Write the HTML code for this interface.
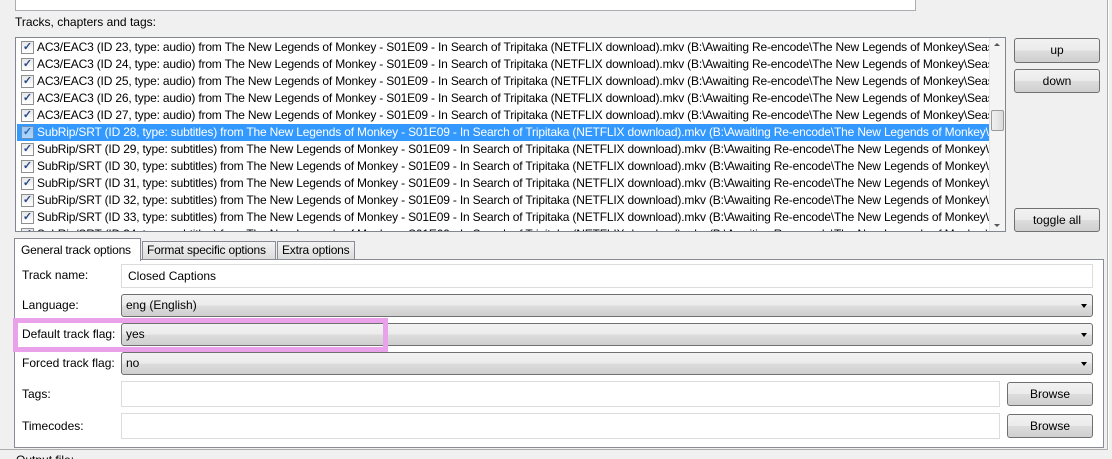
<!DOCTYPE html>
<html><head><meta charset="utf-8"><style>
*{box-sizing:border-box;margin:0;padding:0}
html,body{width:1112px;height:459px;overflow:hidden}
body{background:#f0f0f0;font-family:"Liberation Sans",sans-serif;font-size:12px;color:#000;position:relative}
.a{position:absolute;white-space:nowrap}
.outer{left:-2px;top:-2px;width:1110px;height:452px;border:1px solid #adadad;border-top:none;box-shadow:1px 0 0 #fff}
.list{left:15px;top:37px;width:991px;height:195px;background:#fff;border:1px solid #828790;overflow:hidden;letter-spacing:-0.18px}
.row{position:absolute;left:1px;height:17px;width:974px;white-space:nowrap;line-height:17px;overflow:hidden}
.row .cb{position:absolute;left:4px;top:2px;width:13px;height:13px;border:1px solid #8e8f8f;background:linear-gradient(#e8e8e8,#fff);font-size:11px;line-height:11px;text-align:center;color:#2a4a8a;font-weight:bold;letter-spacing:0}
.row span.t{position:absolute;left:20px}
.sel{background:#3399ff;color:#fff}
.sb{position:absolute;right:0;top:0;width:16px;height:193px;background:#f4f4f4;border-left:1px solid #e6e6e6}
.btn{position:absolute;border:1px solid #707070;border-radius:3px;background:linear-gradient(#f2f2f2 0,#ebebeb 50%,#dddddd 51%,#cfcfcf);text-align:center;font-size:12px}
.tabs{left:14px;top:259px;width:1090px;height:189px;background:#fff;border:1px solid #898c95}
.tab{position:absolute;top:241px;height:19px;border:1px solid #898c95;background:linear-gradient(#f2f2f2,#dcdcdc);line-height:17px;padding:0 4px;white-space:nowrap;overflow:hidden;letter-spacing:-0.2px}
.lbl{position:absolute;left:22px;white-space:nowrap}
.inp{position:absolute;left:121px;border:1px solid #dcdcdc;background:#fff;padding-left:6px}
.combo{position:absolute;left:121px;width:972px;height:23px;border:1px solid #707070;border-radius:3px;background:linear-gradient(#f2f2f2 0,#ebebeb 50%,#dddddd 51%,#cfcfcf);line-height:21px;padding-left:4px}
.combo:after{content:"";position:absolute;right:5px;top:9px;border-left:3.5px solid transparent;border-right:3.5px solid transparent;border-top:4px solid #000}
</style></head><body>
<div class="a outer"></div>
<div class="a" style="left:15px;top:-2px;width:901px;height:13px;background:#fff;border:1px solid #abadb3"></div>
<div class="a" style="left:15px;top:15px">Tracks, chapters and tags:</div>
<div class="a list">
<div class="row" style="top:1px"><div class="cb">✓</div><span class="t">AC3/EAC3 (ID 23, type: audio) from The New Legends of Monkey - S01E09 - In Search of Tripitaka (NETFLIX download).mkv (B:\Awaiting Re-encode\The New Legends of Monkey\Season 1)</span></div>
<div class="row" style="top:18px"><div class="cb">✓</div><span class="t">AC3/EAC3 (ID 24, type: audio) from The New Legends of Monkey - S01E09 - In Search of Tripitaka (NETFLIX download).mkv (B:\Awaiting Re-encode\The New Legends of Monkey\Season 1)</span></div>
<div class="row" style="top:35px"><div class="cb">✓</div><span class="t">AC3/EAC3 (ID 25, type: audio) from The New Legends of Monkey - S01E09 - In Search of Tripitaka (NETFLIX download).mkv (B:\Awaiting Re-encode\The New Legends of Monkey\Season 1)</span></div>
<div class="row" style="top:52px"><div class="cb">✓</div><span class="t">AC3/EAC3 (ID 26, type: audio) from The New Legends of Monkey - S01E09 - In Search of Tripitaka (NETFLIX download).mkv (B:\Awaiting Re-encode\The New Legends of Monkey\Season 1)</span></div>
<div class="row" style="top:69px"><div class="cb">✓</div><span class="t">AC3/EAC3 (ID 27, type: audio) from The New Legends of Monkey - S01E09 - In Search of Tripitaka (NETFLIX download).mkv (B:\Awaiting Re-encode\The New Legends of Monkey\Season 1)</span></div>
<div class="row sel" style="top:86px"><div class="cb" style="opacity:.6">✓</div><span class="t">SubRip/SRT (ID 28, type: subtitles) from The New Legends of Monkey - S01E09 - In Search of Tripitaka (NETFLIX download).mkv (B:\Awaiting Re-encode\The New Legends of Monkey\Season 1)</span></div>
<div class="row" style="top:103px"><div class="cb">✓</div><span class="t">SubRip/SRT (ID 29, type: subtitles) from The New Legends of Monkey - S01E09 - In Search of Tripitaka (NETFLIX download).mkv (B:\Awaiting Re-encode\The New Legends of Monkey\Season 1)</span></div>
<div class="row" style="top:120px"><div class="cb">✓</div><span class="t">SubRip/SRT (ID 30, type: subtitles) from The New Legends of Monkey - S01E09 - In Search of Tripitaka (NETFLIX download).mkv (B:\Awaiting Re-encode\The New Legends of Monkey\Season 1)</span></div>
<div class="row" style="top:137px"><div class="cb">✓</div><span class="t">SubRip/SRT (ID 31, type: subtitles) from The New Legends of Monkey - S01E09 - In Search of Tripitaka (NETFLIX download).mkv (B:\Awaiting Re-encode\The New Legends of Monkey\Season 1)</span></div>
<div class="row" style="top:154px"><div class="cb">✓</div><span class="t">SubRip/SRT (ID 32, type: subtitles) from The New Legends of Monkey - S01E09 - In Search of Tripitaka (NETFLIX download).mkv (B:\Awaiting Re-encode\The New Legends of Monkey\Season 1)</span></div>
<div class="row" style="top:171px"><div class="cb">✓</div><span class="t">SubRip/SRT (ID 33, type: subtitles) from The New Legends of Monkey - S01E09 - In Search of Tripitaka (NETFLIX download).mkv (B:\Awaiting Re-encode\The New Legends of Monkey\Season 1)</span></div>
<div class="row" style="top:188px"><div class="cb">✓</div><span class="t">SubRip/SRT (ID 34, type: subtitles) from The New Legends of Monkey - S01E09 - In Search of Tripitaka (NETFLIX download).mkv (B:\Awaiting Re-encode\The New Legends of Monkey\Season 1)</span></div>
<div class="sb">
<div class="a" style="left:4px;top:5px;border-left:3px solid transparent;border-right:3px solid transparent;border-bottom:3px solid #555"></div>
<div class="a" style="left:1px;top:72px;width:13px;height:21px;border:1px solid #9a9a9a;border-radius:2px;background:linear-gradient(90deg,#f0f0f0,#dcdcdc)"></div>
<div class="a" style="left:4px;top:186px;border-left:3px solid transparent;border-right:3px solid transparent;border-top:3px solid #555"></div>
</div>
</div>
<div class="btn" style="left:1014px;top:38px;width:86px;height:25px;line-height:23px">up</div>
<div class="btn" style="left:1014px;top:69px;width:86px;height:24px;line-height:22px">down</div>
<div class="btn" style="left:1014px;top:208px;width:86px;height:24px;line-height:22px">toggle all</div>

<div class="a tabs"></div>
<div class="a" style="left:14px;top:238px;width:127px;height:23px;border:1px solid #898c95;border-bottom:none;background:#fff;line-height:22px;padding-left:6px;letter-spacing:-0.2px">General track options</div>
<div class="tab" style="left:142px;width:134px">Format specific options</div>
<div class="tab" style="left:277px;width:78px">Extra options</div>

<div class="lbl" style="top:268px">Track name:</div>
<div class="inp" style="top:264px;width:972px;height:24px;line-height:22px">Closed Captions</div>
<div class="lbl" style="top:298px">Language:</div>
<div class="combo" style="top:294px">eng (English)</div>
<div class="lbl" style="top:356px">Forced track flag:</div>
<div class="combo" style="top:352px">no</div>
<div class="combo" style="top:323px">yes</div>
<div class="a" style="left:13px;top:318px;width:375px;height:34px;border:5px solid #e9a2e9"></div>
<div class="lbl" style="top:327px">Default track flag:</div>
<div class="lbl" style="top:387px">Tags:</div>
<div class="inp" style="top:381px;width:879px;height:26px"></div>
<div class="btn" style="left:1007px;top:382px;width:86px;height:24px;line-height:22px">Browse</div>
<div class="lbl" style="top:419px">Timecodes:</div>
<div class="inp" style="top:413px;width:879px;height:26px"></div>
<div class="btn" style="left:1007px;top:414px;width:86px;height:24px;line-height:22px">Browse</div>
<div class="a" style="left:16px;top:453px">Output file:</div>
</body></html>
